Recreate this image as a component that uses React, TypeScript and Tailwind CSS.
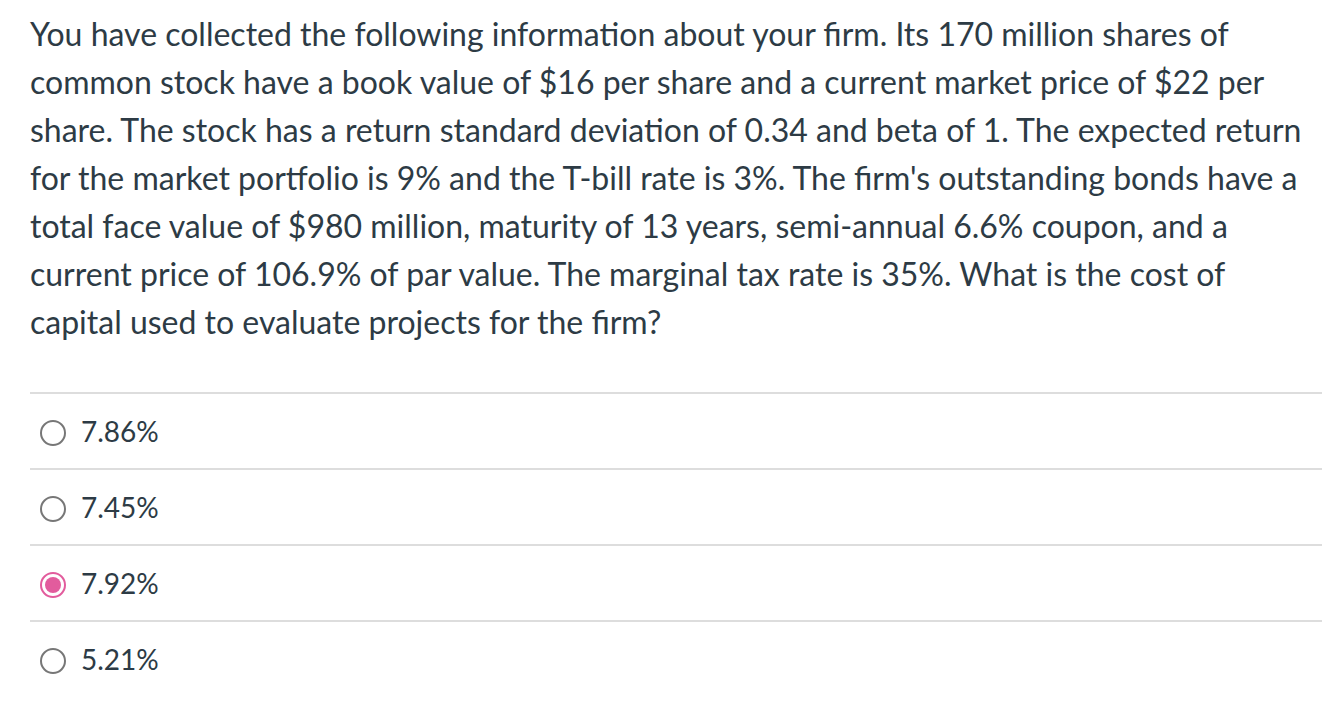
import React from 'react';

const options = [
    { label: '7.86%', selected: false },
    { label: '7.45%', selected: false },
    { label: '7.92%', selected: true },
    { label: '5.21%', selected: false },
];

function Radio({ selected }: { selected: boolean }) {
    if (selected) {
        return (
            <span className="mt-[3px] w-[26px] h-[26px] rounded-full border-[2px] border-[#e25c9d] flex items-center justify-center shrink-0">
                <span className="w-[16px] h-[16px] rounded-full bg-[#e25c9d]" />
            </span>
        );
    }
    return <span className="mt-[3px] w-[26px] h-[26px] rounded-full border-[2px] border-[#777777] shrink-0" />;
}

export default function App() {
    return (
        <div className="w-[1328px] h-[704px] bg-white overflow-hidden text-[#2d3b45] font-['Lato','Noto_Sans',sans-serif]">
            <div className="pl-[30px] pr-[6px] pt-[10px]">
                <p className="text-[32px] leading-[48px] pr-[14px]">
                    You have collected the following information about your firm. Its 170 million shares of common stock have a book value of $16 per share and a current market price of $22 per share. The stock has a return standard deviation of 0.34 and beta of 1. The expected return for the market portfolio is 9% and the T-bill rate is 3%. The firm's outstanding bonds have a total face value of $980 million, maturity of 13 years, semi-annual 6.6% coupon, and a current price of 106.9% of par value. The marginal tax rate is 35%. What is the cost of capital used to evaluate projects for the firm?
                </p>
                <div className="mt-[46px]">
                    {options.map((o) => (
                        <div key={o.label} className="border-t-2 border-[#dddddd] h-[76px] flex items-center gap-[15px] pl-[10px]">
                            <Radio selected={o.selected} />
                            <span className="text-[28px] leading-[48px]">{o.label}</span>
                        </div>
                    ))}
                </div>
            </div>
        </div>
    );
}
